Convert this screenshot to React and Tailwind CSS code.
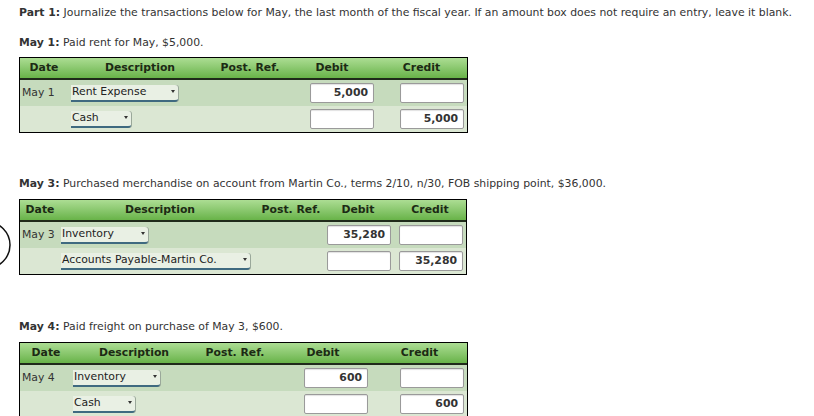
import React from 'react'

const tables = [
  {
    head: [48, 144, 76, 88, 91],
    dateW: 51,
    gap: 26,
    rows: [
      { date: 'May 1', acct: 'Rent Expense', selW: 107, debit: '5,000', credit: '' },
      { date: '', acct: 'Cash', selW: 60, debit: '', credit: '5,000' },
    ],
    width: 'w-[449px]',
  },
  {
    head: [40, 200, 62, 72, 72],
    dateW: 41,
    gap: 8,
    rows: [
      { date: 'May 3', acct: 'Inventory', selW: 87, debit: '35,280', credit: '' },
      { date: '', acct: 'Accounts Payable-Martin Co.', selW: 189, debit: '', credit: '35,280' },
    ],
    width: 'w-[448px]',
  },
  {
    head: [52, 124, 78, 98, 95],
    dateW: 53,
    gap: 32,
    rows: [
      { date: 'May 4', acct: 'Inventory', selW: 87, debit: '600', credit: '' },
      { date: '', acct: 'Cash', selW: 62, debit: '', credit: '600' },
    ],
    width: 'w-[449px]',
  },
]

const labels = ['Date', 'Description', 'Post. Ref.', 'Debit', 'Credit']

const Select = ({ text, width }) => (
  <div
    className="relative h-[17px] flex items-center pl-[1px] bg-[#e9f0e4] border-b-2 border-[#3f6a80] rounded-r-[3px] shadow-[1px_0_0_#9aa89a] text-[#222]"
    style={{ width }}
  >
    <span className="leading-none whitespace-nowrap">{text}</span>
    <span className="absolute right-[3px] top-[5px] w-0 h-0 border-l-[2.5px] border-r-[2.5px] border-t-[3px] border-l-transparent border-r-transparent border-t-[#333]" />
  </div>
)

const Amount = ({ value, style }) => (
  <div
    className="h-[20px] w-[64px] bg-white border border-[#9a9a9a] rounded-[2px] shadow-[inset_0_1px_1px_rgba(0,0,0,0.12)] flex items-center justify-end pr-[5px] font-bold text-[#333]"
    style={style}
  >
    {value}
  </div>
)

const Journal = ({ t }) => (
  <div className={`${t.width} border border-black`}>
    <div className="h-[22px] flex items-center bg-gradient-to-b from-[#acdd93] to-[#68b348] border-b-2 border-[#1f2a1a] font-bold text-[#1c2a14]">
      {labels.map((l, i) => (
        <div key={l} className="shrink-0 text-center whitespace-nowrap" style={{ width: t.head[i] }}>{l}</div>
      ))}
    </div>
    {t.rows.map((r, i) => (
      <div key={i} className={`h-[26px] flex items-center ${i === 0 ? 'bg-[#c6dbbd]' : 'bg-[#dbe7d3]'}`}>
        <div className="shrink-0 pl-[2px] text-[#333] whitespace-nowrap" style={{ width: t.dateW }}>{r.date}</div>
        <Select text={r.acct} width={r.selW} />
        <div className="flex-1" />
        <Amount value={r.debit} />
        <Amount value={r.credit} style={{ marginLeft: t.gap, marginRight: 3 }} />
      </div>
    ))}
  </div>
)

export default function App() {
  return (
    <div className="relative w-[814px] h-[416px] overflow-hidden bg-white font-['DejaVu_Sans',sans-serif] text-[10.85px] text-[#333] pl-[19px] pt-[6px]">
      <p className="leading-[14px] whitespace-nowrap"><b>Part 1:</b> Journalize the transactions below for May, the last month of the fiscal year. If an amount box does not require an entry, leave it blank.</p>

      <p className="leading-[14px] mt-[16px]"><b>May 1:</b> Paid rent for May, $5,000.</p>
      <div className="mt-[7px]"><Journal t={tables[0]} /></div>

      <p className="leading-[14px] mt-[44px]"><b>May 3:</b> Purchased merchandise on account from Martin Co., terms 2/10, n/30, FOB shipping point, $36,000.</p>
      <div className="mt-[8px]"><Journal t={tables[1]} /></div>

      <p className="leading-[14px] mt-[45px]"><b>May 4:</b> Paid freight on purchase of May 3, $600.</p>
      <div className="mt-[8px]"><Journal t={tables[2]} /></div>

      <svg className="absolute left-0 top-[220px]" width="14" height="52" viewBox="0 0 14 52">
        <circle cx="-13" cy="25" r="23" fill="none" stroke="#111" strokeWidth="1.5" />
      </svg>
    </div>
  )
}
